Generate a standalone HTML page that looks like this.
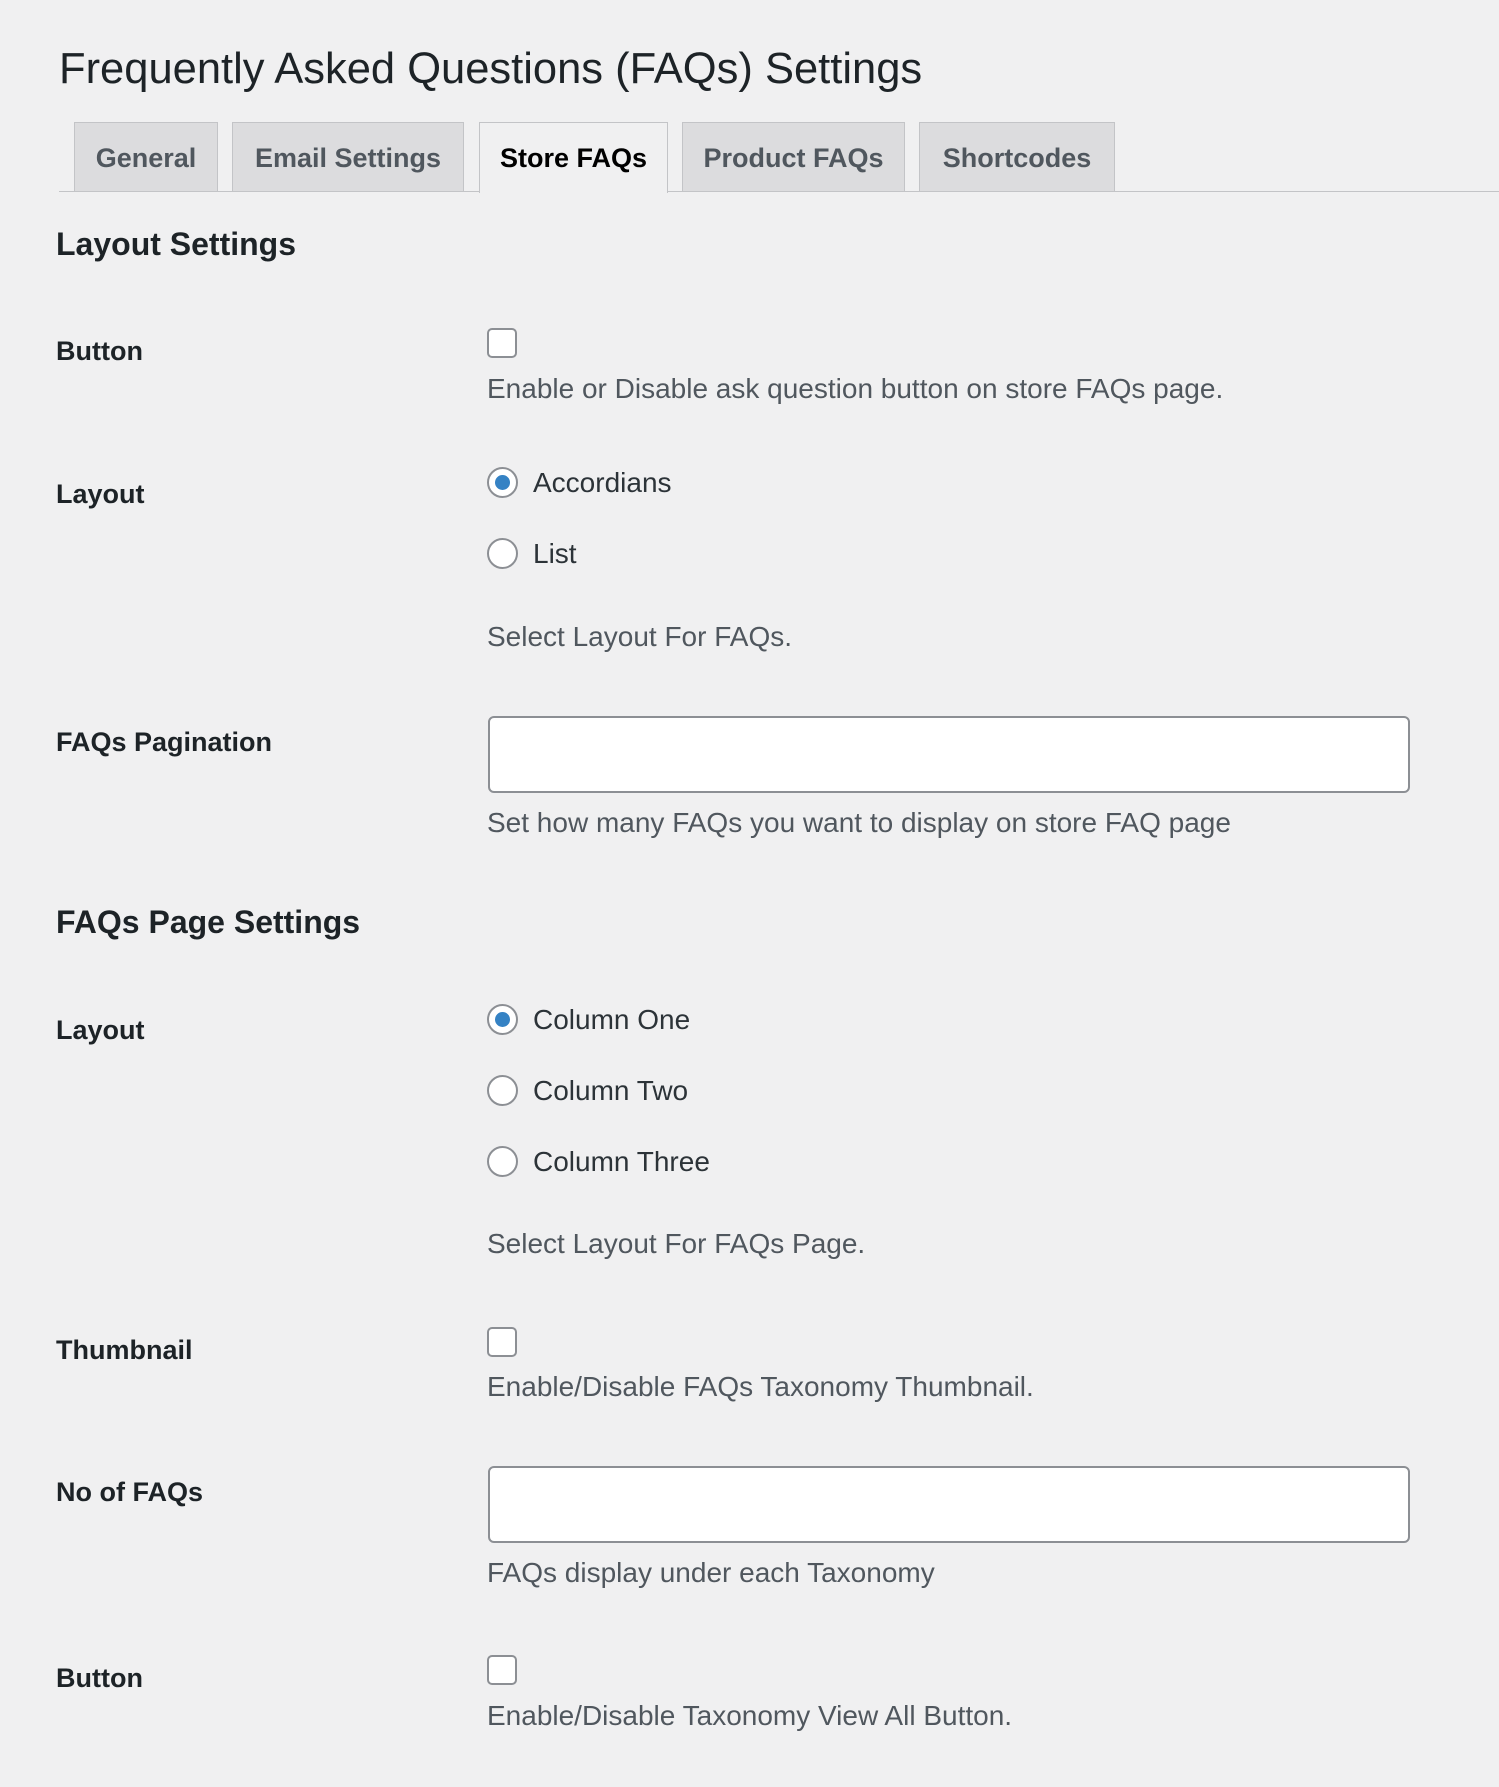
<!DOCTYPE html>
<html><head><meta charset="utf-8"><style>
body{margin:0;width:1499px;height:1787px;background:#f0f0f1;font-family:"Liberation Sans",sans-serif;color:#1d2327;position:relative;overflow:hidden}
.a{position:absolute;white-space:nowrap}
h1{position:absolute;left:59px;top:44px;margin:0;font-size:43.5px;font-weight:400;line-height:50px;color:#1d2327}
.tab{position:absolute;top:122px;height:69px;box-sizing:border-box;background:#dcdcde;border:1px solid #c3c4c7;border-bottom:none;font-size:27px;font-weight:700;color:#50575e;text-align:center;line-height:70px}
.tab.on{background:#f0f0f1;color:#000;height:71px}
.line{position:absolute;left:59px;right:0;top:191px;height:1px;background:#c3c4c7}
.h2{font-size:32px;font-weight:700;line-height:40px}
.lbl{font-size:27px;font-weight:700;line-height:34px;left:56px}
.desc{font-size:28px;color:#50575e;line-height:34px;left:487px}
.opt{font-size:28px;color:#2c3338;line-height:34px;left:533px}
.cb{position:absolute;left:487px;width:30px;height:30px;box-sizing:border-box;border:2px solid #8c8f94;border-radius:5px;background:#fff}
.rd{position:absolute;left:487px;width:31px;height:31px;box-sizing:border-box;border:2px solid #8c8f94;border-radius:50%;background:#fff}
.rd.on::after{content:"";position:absolute;left:6px;top:6px;width:15px;height:15px;border-radius:50%;background:#3582c4}
.in{position:absolute;left:488px;width:922px;height:77px;box-sizing:border-box;border:2px solid #8c8f94;border-radius:6px;background:#fff}
</style></head><body>
<h1>Frequently Asked Questions (FAQs) Settings</h1>
<div class="line"></div>
<div class="tab" style="left:74px;width:144px">General</div>
<div class="tab" style="left:232px;width:232px">Email Settings</div>
<div class="tab on" style="left:479px;width:189px">Store FAQs</div>
<div class="tab" style="left:682px;width:223px">Product FAQs</div>
<div class="tab" style="left:919px;width:196px">Shortcodes</div>

<div class="a h2" style="left:56px;top:224px">Layout Settings</div>
<div class="a lbl" style="top:334px">Button</div>
<div class="cb" style="top:328px"></div>
<div class="a desc" style="top:372px">Enable or Disable ask question button on store FAQs page.</div>

<div class="a lbl" style="top:477px">Layout</div>
<div class="rd on" style="top:467px"></div>
<div class="a opt" style="top:466px">Accordians</div>
<div class="rd" style="top:538px"></div>
<div class="a opt" style="top:537px">List</div>
<div class="a desc" style="top:620px">Select Layout For FAQs.</div>

<div class="a lbl" style="top:725px">FAQs Pagination</div>
<div class="in" style="top:716px"></div>
<div class="a desc" style="top:806px">Set how many FAQs you want to display on store FAQ page</div>

<div class="a h2" style="left:56px;top:902px">FAQs Page Settings</div>
<div class="a lbl" style="top:1013px">Layout</div>
<div class="rd on" style="top:1004px"></div>
<div class="a opt" style="top:1003px">Column One</div>
<div class="rd" style="top:1075px"></div>
<div class="a opt" style="top:1074px">Column Two</div>
<div class="rd" style="top:1146px"></div>
<div class="a opt" style="top:1145px">Column Three</div>
<div class="a desc" style="top:1227px">Select Layout For FAQs Page.</div>

<div class="a lbl" style="top:1333px">Thumbnail</div>
<div class="cb" style="top:1327px"></div>
<div class="a desc" style="top:1370px">Enable/Disable FAQs Taxonomy Thumbnail.</div>

<div class="a lbl" style="top:1475px">No of FAQs</div>
<div class="in" style="top:1466px"></div>
<div class="a desc" style="top:1556px">FAQs display under each Taxonomy</div>

<div class="a lbl" style="top:1661px">Button</div>
<div class="cb" style="top:1655px"></div>
<div class="a desc" style="top:1699px">Enable/Disable Taxonomy View All Button.</div>
</body></html>
